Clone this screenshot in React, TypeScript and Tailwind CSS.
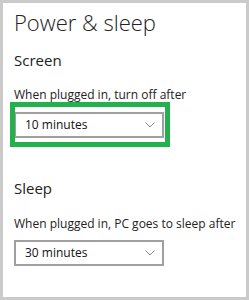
function Chevron() {
  return (
    <svg width="10" height="6" viewBox="0 0 10 6" fill="none" className="text-[#8a8a8a]">
      <polyline points="0.5,0.5 5,5 9.5,0.5" stroke="currentColor" strokeWidth="1" />
    </svg>
  );
}

function Dropdown({ value, top }: { value: string; top: string }) {
  return (
    <div
      className={`${top} ml-[11px] w-[150px] h-[26px] border-2 border-[#a0a0a0] bg-white flex items-center justify-between pl-[9px] pr-[7px]`}
    >
      <span className="text-[12px] text-[#111]">{value}</span>
      <Chevron />
    </div>
  );
}

export default function App() {
  return (
    <div
      className="w-[249px] h-[300px] border-[3px] border-[#cacaca] bg-white text-[#222]"
      style={{ fontFamily: '"Open Sans", "Noto Sans", sans-serif' }}
    >
      <h1 className="mt-[4px] ml-[11px] text-[22px] leading-[30px] font-light">Power &amp; sleep</h1>

      <h2 className="mt-[13px] ml-[11px] text-[15px] leading-[20px]">Screen</h2>
      <p className="mt-[17px] ml-[11px] text-[12px] leading-[16px]">When plugged in, turn off after</p>

      {/* green highlight round the first dropdown */}
      <div className="relative pt-[9px]">
        <div className="absolute left-[7px] top-[-1px] w-[160px] h-[45px] border-[5px] border-[#22b14c]" />
        <Dropdown value="10 minutes" top="mt-0" />
      </div>

      <h2 className="mt-[40px] ml-[11px] text-[15px] leading-[20px]">Sleep</h2>
      <p className="mt-[18px] ml-[11px] text-[12px] leading-[16px]">When plugged in, PC goes to sleep after</p>
      <Dropdown value="30 minutes" top="mt-[8px]" />
    </div>
  );
}
